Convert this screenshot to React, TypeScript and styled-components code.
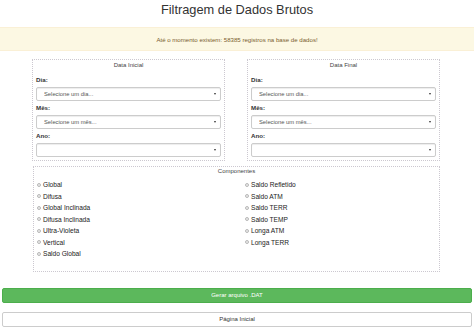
import React from "react";
import styled, { createGlobalStyle } from "styled-components";

const GlobalStyle = createGlobalStyle`
  html, body {
    margin: 0;
    padding: 0;
    background: #fff;
  }
  body {
    font-family: "Liberation Sans", Arial, Helvetica, sans-serif;
    color: #333;
  }
  * {
    box-sizing: border-box;
  }
`;

const dateFields = [
  { label: "Dia:", placeholder: "Selecione um dia..." },
  { label: "Mês:", placeholder: "Selecione um mês..." },
  { label: "Ano:", placeholder: "" },
];

const leftComponents = [
  "Global",
  "Difusa",
  "Global Inclinada",
  "Difusa Inclinada",
  "Ultra-Violeta",
  "Vertical",
  "Saldo Global",
];

const rightComponents = [
  "Saldo Refletido",
  "Saldo ATM",
  "Saldo TERR",
  "Saldo TEMP",
  "Longa ATM",
  "Longa TERR",
];

function DateBox({ title }: { title: string }) {
  return (
    <Box>
      <BoxTitle>{title}</BoxTitle>
      <Fields>
        {dateFields.map((f) => (
          <Field key={f.label}>
            <Label>{f.label}</Label>
            <SelectWrap>
              <Select defaultValue="">
                <option value="">{f.placeholder}</option>
              </Select>
            </SelectWrap>
          </Field>
        ))}
      </Fields>
    </Box>
  );
}

export default function App() {
  return (
    <Page>
      <GlobalStyle />
      <Title>Filtragem de Dados Brutos</Title>
      <Alert>Até o momento existem: 58385 registros na base de dados!</Alert>

      <Form>
        <DateRow>
          <DateBox title="Data Inicial" />
          <DateBox title="Data Final" />
        </DateRow>

        <ComponentsBox>
          <BoxTitle>Componentes</BoxTitle>
          <Columns>
            {[leftComponents, rightComponents].map((col, i) => (
              <Column key={i}>
                {col.map((name) => (
                  <RadioItem key={name}>
                    <Radio type="radio" name="componente" />
                    {name}
                  </RadioItem>
                ))}
              </Column>
            ))}
          </Columns>
        </ComponentsBox>
      </Form>

      <Actions>
        <Button $variant="success">Gerar arquivo .DAT</Button>
        <Button $variant="default">Página Inicial</Button>
      </Actions>
    </Page>
  );
}

const Page = styled.main`
  width: 474px;
  min-height: 327px;
`;

const Title = styled.h1`
  margin: 0;
  padding-top: 2px;
  font-size: 12.8px;
  line-height: 16px;
  font-weight: 400;
  text-align: center;
  color: #333;
`;

const Alert = styled.div`
  margin-top: 9px;
  height: 24px;
  display: flex;
  align-items: center;
  justify-content: center;
  background: #fcf8e3;
  border-top: 1px solid #faf0d6;
  border-bottom: 1px solid #faf0d6;
  color: #7a5d2e;
  font-size: 6.1px;
`;

const Form = styled.section`
  margin-top: 8px;
  padding: 0 34px 0 32px;
  display: flex;
  flex-direction: column;
  row-gap: 5px;
`;

const DateRow = styled.div`
  display: grid;
  grid-template-columns: 1fr 1fr;
  column-gap: 22px;
`;

const Box = styled.fieldset`
  margin: 0;
  min-width: 0;
  padding: 1px 3px 3px;
  border: 1px dotted #ccc8d0;
`;

const BoxTitle = styled.div`
  height: 8px;
  line-height: 8px;
  text-align: center;
  font-size: 6px;
  color: #444;
`;

const Fields = styled.div`
  display: flex;
  flex-direction: column;
  row-gap: 3px;
  margin-top: 7px;
`;

const Field = styled.div`
  display: flex;
  flex-direction: column;
`;

const Label = styled.label`
  height: 8px;
  line-height: 8px;
  font-size: 6.2px;
  font-weight: 700;
  color: #333;
  margin-bottom: 3px;
`;

const SelectWrap = styled.div`
  position: relative;
  height: 14px;

  &::after {
    content: "";
    position: absolute;
    right: 5px;
    top: 6px;
    border-left: 1.3px solid transparent;
    border-right: 1.3px solid transparent;
    border-top: 2px solid #333;
    pointer-events: none;
  }
`;

const Select = styled.select`
  display: block;
  appearance: none;
  -webkit-appearance: none;
  width: 100%;
  height: 14px;
  margin: 0;
  padding: 0 0 0 7px;
  border: 1px solid #ccc;
  border-radius: 2px;
  background: #fff;
  box-shadow: inset 0 1px 1px rgba(0, 0, 0, 0.075);
  font-family: inherit;
  font-size: 5.8px;
  line-height: 12px;
  color: #555;
  outline: none;
`;

const ComponentsBox = styled.fieldset`
  margin: 0 0 0 1px;
  min-width: 0;
  padding: 0 0 11px;
  border: 1px dotted #ccc8d0;
`;

const Columns = styled.div`
  display: grid;
  grid-template-columns: 208px 1fr;
  margin-top: 4px;
`;

const Column = styled.div`
  display: flex;
  flex-direction: column;
  padding-left: 3px;
`;

const RadioItem = styled.label`
  display: flex;
  align-items: center;
  height: 11.5px;
  font-size: 6.6px;
  color: #222;
`;

const Radio = styled.input`
  appearance: none;
  -webkit-appearance: none;
  flex: none;
  width: 4px;
  height: 4px;
  margin: 0 2px 0 0;
  border: 1px solid #b8b8b8;
  border-radius: 50%;
  background: #ececec;
`;

const Actions = styled.div`
  margin-top: 16px;
  padding: 0 2px;
  display: flex;
  flex-direction: column;
  row-gap: 9px;
`;

const Button = styled.button<{ $variant: "success" | "default" }>`
  display: block;
  width: 100%;
  height: 15px;
  margin: 0;
  padding: 0;
  border-radius: 2px;
  font-family: inherit;
  font-size: 6px;
  line-height: 13px;
  cursor: pointer;
  border: 1px solid ${({ $variant }) => ($variant === "success" ? "#4cae4c" : "#ccc")};
  background: ${({ $variant }) => ($variant === "success" ? "#5cb85c" : "#fff")};
  color: ${({ $variant }) => ($variant === "success" ? "#fff" : "#333")};
`;
